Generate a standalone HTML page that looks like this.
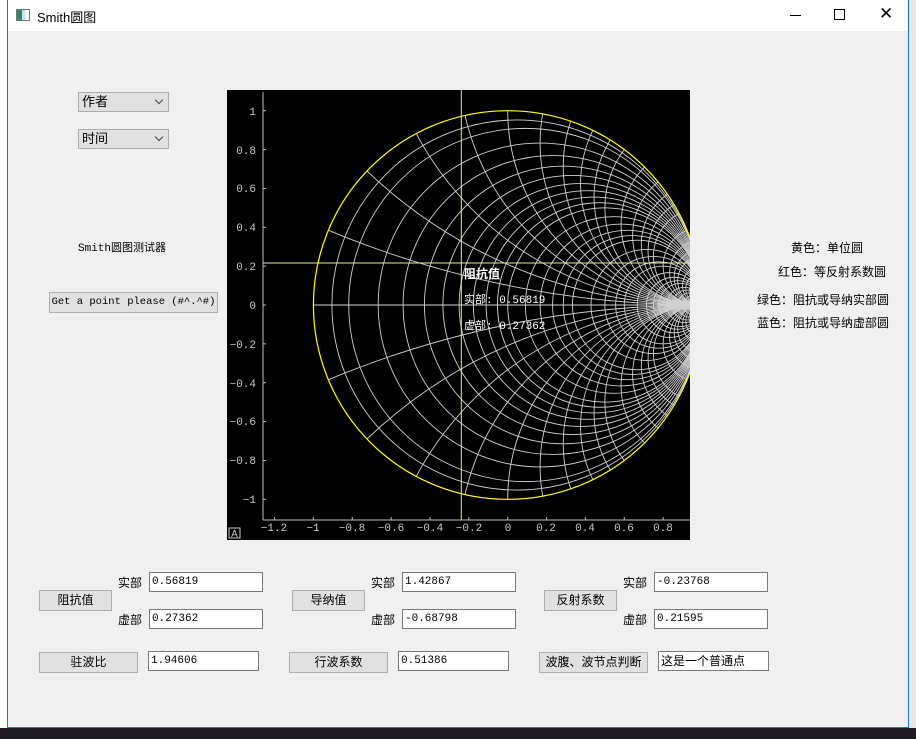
<!DOCTYPE html>
<html><head><meta charset="utf-8"><style>
*{margin:0;padding:0;box-sizing:border-box}
html,body{width:916px;height:739px;overflow:hidden}
body{background:#fff;position:relative;font-family:"Liberation Sans","Noto Sans CJK SC",sans-serif;font-size:12px;color:#000}
.a{position:absolute}
.win{left:7px;top:0;width:902px;height:728px;background:#f0f0f0;border:1px solid #1979ca;border-top:none}
.title{left:8px;top:0;width:900px;height:31px;background:#fff}
.btn{position:absolute;background:#e1e1e1;border:1px solid #adadad;text-align:center;font-size:12px;line-height:19px;white-space:nowrap;overflow:hidden}
.inp{position:absolute;background:#fff;border:1px solid #7a7a7a;font-family:"Liberation Mono","Noto Sans CJK SC",monospace;font-size:11px;line-height:18px;padding-left:2px;white-space:nowrap}
.lab{position:absolute;font-size:12px}
.cb{position:absolute;background:#e1e1e1;border:1px solid #adadad;font-size:13px;line-height:17px;padding-left:3px}
.cb:after{content:"";position:absolute;right:6px;top:4px;width:5px;height:5px;border-right:1px solid #444;border-bottom:1px solid #444;transform:rotate(45deg)}
.r{position:absolute;right:27px;font-size:12px;text-align:right;white-space:nowrap}
</style></head><body>
<div class="a win"></div>
<div class="a title"></div>
<div class="a" style="left:16px;top:9px;width:14px;height:12px;border:1px solid #777;background:linear-gradient(90deg,#2a8a6a 0 40%,#cde 40% 70%,#fff 70%)"></div>
<div class="a" style="left:37px;top:7px;font-size:13px">Smith圆图</div>
<div class="a" style="left:790px;top:15px;width:11px;height:1px;background:#000"></div>
<div class="a" style="left:834px;top:9px;width:11px;height:11px;border:1px solid #000"></div>
<div class="a" style="left:879px;top:4px;font-size:17px;line-height:20px">✕</div>
<div class="a" style="left:0;top:728px;width:916px;height:11px;background:#201a24"></div>
<div class="a" style="left:909px;top:0;width:7px;height:728px;background:#e8e8e8"></div>

<div class="cb" style="left:78px;top:92px;width:91px;height:20px">作者</div>
<div class="cb" style="left:78px;top:129px;width:91px;height:20px">时间</div>
<div class="a" style="left:78px;top:239px;font-family:'Liberation Mono','Noto Sans CJK SC',monospace;font-size:11px;white-space:nowrap">Smith圆图测试器</div>
<div class="btn" style="left:49px;top:292px;width:169px;height:21px;font-family:'Liberation Mono',monospace;font-size:10.5px">Get a point please (#^.^#)</div>

<div class="r" style="top:239px;right:53px">黄色：单位圆</div>
<div class="r" style="top:263px;right:30px">红色：等反射系数圆</div>
<div class="r" style="top:291px">绿色：阻抗或导纳实部圆</div>
<div class="r" style="top:314px">蓝色：阻抗或导纳虚部圆</div>

<svg class="a" style="left:227px;top:90px" width="463" height="450" viewBox="227 90 463 450">
<defs><clipPath id="uc"><circle cx="507.7" cy="305" r="194.3"/></clipPath></defs>
<rect x="227" y="90" width="463" height="450" fill="#000"/>
<g id="grid" clip-path="url(#uc)" fill="none" stroke="#d0d0d0" stroke-width="0.9"></g>
<circle cx="507.7" cy="305" r="194.3" fill="none" stroke="#ffff00" stroke-width="1.2"/>
<line x1="461.3" y1="90" x2="461.3" y2="520" stroke="#e8e8a0"/>
<line x1="263" y1="263" x2="690" y2="263" stroke="#e8e8a0"/>
<g stroke="#c0c0c0"><line x1="263" y1="92" x2="263" y2="520"/><line x1="263" y1="520" x2="690" y2="520"/></g>
<g id="ticks" stroke="#c0c0c0"></g>
<g fill="#c8c8c8" font-family="Liberation Mono,monospace" font-size="11" text-anchor="end">
<text x="256" y="115">1</text><text x="256" y="154">0.8</text><text x="256" y="192">0.6</text><text x="256" y="231">0.4</text><text x="256" y="270">0.2</text><text x="256" y="309">0</text><text x="256" y="348">−0.2</text><text x="256" y="387">−0.4</text><text x="256" y="425">−0.6</text><text x="256" y="464">−0.8</text><text x="256" y="503">−1</text>
</g>
<g fill="#c8c8c8" font-family="Liberation Mono,monospace" font-size="11" text-anchor="middle">
<text x="274" y="531">−1.2</text><text x="313" y="531">−1</text><text x="352" y="531">−0.8</text><text x="391" y="531">−0.6</text><text x="430" y="531">−0.4</text><text x="469" y="531">−0.2</text><text x="508" y="531">0</text><text x="546" y="531">0.2</text><text x="585" y="531">0.4</text><text x="624" y="531">0.6</text><text x="663" y="531">0.8</text>
</g>
<rect x="229" y="528" width="11" height="10" fill="none" stroke="#ccc"/><text x="234.5" y="537" fill="#ccc" font-size="10" text-anchor="middle" font-family="Liberation Sans">A</text>
<text x="464" y="278" fill="#fff" font-weight="bold" font-size="12" font-family="Liberation Sans,Noto Sans CJK SC">阻抗值</text>
<text x="464" y="303" fill="#fff" font-size="11" font-family="Liberation Mono,Noto Sans CJK SC,monospace">实部: 0.56819</text>
<text x="464" y="329" fill="#fff" font-size="11" font-family="Liberation Mono,Noto Sans CJK SC,monospace">虚部: 0.27362</text>
</svg>

<div class="lab" style="left:118px;top:574px">实部</div>
<div class="inp" style="left:149px;top:572px;width:114px;height:20px">0.56819</div>
<div class="btn" style="left:39px;top:590px;width:73px;height:21px">阻抗值</div>
<div class="lab" style="left:118px;top:611px">虚部</div>
<div class="inp" style="left:149px;top:609px;width:114px;height:20px">0.27362</div>

<div class="lab" style="left:371px;top:574px">实部</div>
<div class="inp" style="left:402px;top:572px;width:114px;height:20px">1.42867</div>
<div class="btn" style="left:292px;top:590px;width:73px;height:21px">导纳值</div>
<div class="lab" style="left:371px;top:611px">虚部</div>
<div class="inp" style="left:402px;top:609px;width:114px;height:20px">-0.68798</div>

<div class="lab" style="left:623px;top:574px">实部</div>
<div class="inp" style="left:654px;top:572px;width:114px;height:20px">-0.23768</div>
<div class="btn" style="left:544px;top:590px;width:73px;height:21px">反射系数</div>
<div class="lab" style="left:623px;top:611px">虚部</div>
<div class="inp" style="left:654px;top:609px;width:114px;height:20px">0.21595</div>

<div class="btn" style="left:39px;top:652px;width:99px;height:21px">驻波比</div>
<div class="inp" style="left:148px;top:651px;width:111px;height:20px">1.94606</div>
<div class="btn" style="left:289px;top:652px;width:99px;height:21px">行波系数</div>
<div class="inp" style="left:398px;top:651px;width:111px;height:20px">0.51386</div>
<div class="btn" style="left:539px;top:652px;width:109px;height:21px">波腹、波节点判断</div>
<div class="inp" style="left:658px;top:651px;width:111px;height:20px;font-family:'Liberation Sans','Noto Sans CJK SC',sans-serif;font-size:12px">这是一个普通点</div>

<script>
(function(){
var ns="http://www.w3.org/2000/svg",g=document.getElementById("grid"),cx=507.7,cy=305,s=194.3;
function c(x,y,r){var e=document.createElementNS(ns,"circle");e.setAttribute("cx",x);e.setAttribute("cy",y);e.setAttribute("r",r);g.appendChild(e);}
var rs=[0.05,0.1,0.2,0.3,0.4,0.5,0.6,0.7,0.8,0.9,1,1.2,1.4,1.6,1.8,2,2.5,3,3.5,4,5,6,7,8,10,12,15,20];
rs.forEach(function(r){c(cx+s*r/(1+r),cy,s/(1+r));});
var xs=[0.2,0.4,0.6,0.8,1,1.2,1.4,1.6,1.8,2,2.4,2.8,3.2,3.6,4,5,6,7,8,10,12,15,20];
xs.forEach(function(x){c(cx+s,cy-s/x,s/x);c(cx+s,cy+s/x,s/x);});
var l=document.createElementNS(ns,"line");l.setAttribute("x1",cx-s);l.setAttribute("x2",cx+s);l.setAttribute("y1",cy);l.setAttribute("y2",cy);g.appendChild(l);
var t=document.getElementById("ticks");
for(var i=-6;i<=4;i++){var X=cx+i*0.2*s;var e=document.createElementNS(ns,"line");e.setAttribute("x1",X);e.setAttribute("x2",X);e.setAttribute("y1",520);e.setAttribute("y2",517);t.appendChild(e);}
for(i=-5;i<=5;i++){var Y=cy-i*0.2*s;e=document.createElementNS(ns,"line");e.setAttribute("x1",263);e.setAttribute("x2",266);e.setAttribute("y1",Y);e.setAttribute("y2",Y);t.appendChild(e);}
})();
</script>
</body></html>
